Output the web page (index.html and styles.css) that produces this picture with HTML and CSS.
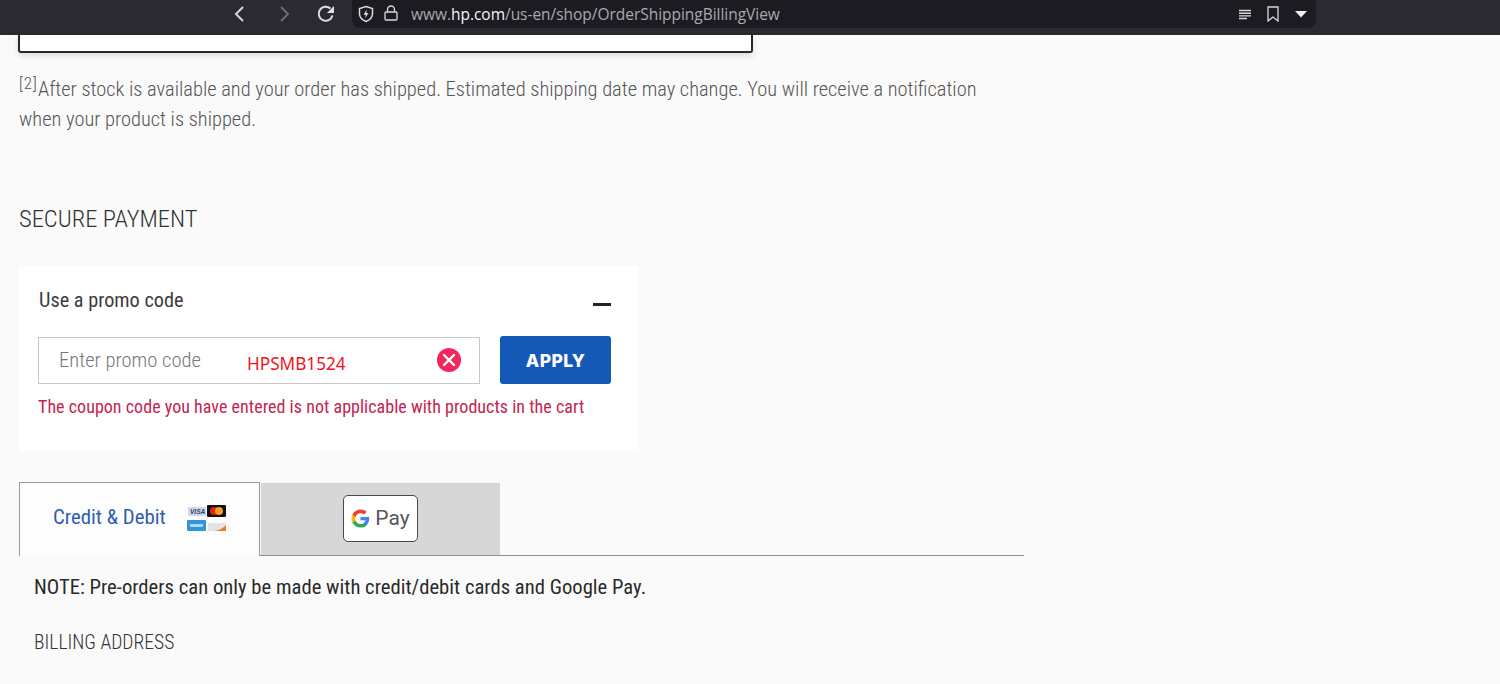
FILE: index.html
```html
<!DOCTYPE html>
<html lang="en">
<head>
<meta charset="utf-8">
<title>Order Shipping Billing</title>
<link rel="stylesheet" href="styles.css">
</head>
<body>
<header class="toolbar">
  <nav class="nav-buttons">
    <svg class="nav-icon" viewBox="0 0 18 18"><path d="M12 2 5 9l7 7" fill="none" stroke="#d6d6da" stroke-width="2"/></svg>
    <svg class="nav-icon" viewBox="0 0 18 18"><path d="m6 2 7 7-7 7" fill="none" stroke="#6b6b70" stroke-width="2"/></svg>
    <svg class="nav-icon nav-reload" viewBox="0 0 18 18"><path d="M15.500 10.500A7 7 0 1 1 13.500 3.600" fill="none" stroke="#e0e0e4" stroke-width="2"/><path d="M17 1v7h-7z" fill="#e0e0e4"/></svg>
  </nav>
  <div class="urlbar">
    <div class="url-left">
      <svg class="shield" viewBox="0 0 16 18"><path d="M8 1.500 14.500 3.500V9c0 3.500-3 6-6.500 7.500C4.500 15 1.500 12.500 1.500 9V3.500z" fill="none" stroke="#d8d8dc" stroke-width="1.500"/><path d="M8.800 4.500 5.500 9.800h2.200l-.5 3.500 3.300-5.300H8.300z" fill="#d8d8dc"/></svg>
      <svg class="lock" viewBox="0 0 14 16"><path d="M3.500 7V4.500a3.500 3.500 0 0 1 7 0V7" fill="none" stroke="#d8d8dc" stroke-width="1.300"/><rect x="1" y="7" width="12" height="8" rx="1" fill="none" stroke="#d8d8dc" stroke-width="1.300"/></svg>
      <span class="url"><span>www.</span><b>hp.com</b><span>/us-en/shop/OrderShippingBillingView</span></span>
    </div>
    <div class="url-right">
      <svg class="reader" viewBox="0 0 14 11"><path d="M1 1.500h12M1 4.200h12M1 6.900h12M1 9.500h8" stroke="#d8d8dc" stroke-width="1.400"/></svg>
      <svg class="bookmark" viewBox="0 0 12 16"><path d="M1 1h10v14l-5-4-5 4z" fill="none" stroke="#d8d8dc" stroke-width="1.300"/></svg>
      <svg class="caret" viewBox="0 0 12 8"><path d="M0 1h12L6 7.500z" fill="#eeeef0"/></svg>
    </div>
  </div>
</header>

<main class="page">
  <div class="summary-box"></div>
  <p class="footnote"><sup>[2]</sup>After stock is available and your order has shipped. Estimated shipping date may change. You will receive a notification when your product is shipped.</p>
  <h2 class="section-title">SECURE PAYMENT</h2>

  <section class="promo">
    <div class="promo-head">
      <span class="promo-title">Use a promo code</span>
      <span class="promo-toggle"></span>
    </div>
    <div class="promo-row">
      <div class="promo-input">
        <span class="placeholder">Enter promo code</span>
        <span class="code">HPSMB1524</span>
        <svg class="clear" viewBox="0 0 24 24"><circle cx="12" cy="12" r="12" fill="#f2275d"/><path d="m7 7 10 10M17 7 7 17" stroke="#fff" stroke-width="2.400" stroke-linecap="round"/></svg>
      </div>
      <button class="apply">APPLY</button>
    </div>
    <p class="promo-error">The coupon code you have entered is not applicable with products in the cart</p>
  </section>

  <div class="tabs">
    <div class="tab tab-active">
      <span class="tab-label">Credit &amp; Debit</span>
      <svg class="cards" viewBox="0 0 40 28">
        <rect x="1" y="3" width="18" height="9" fill="#d3d8e4"/><text x="3" y="10" class="visa">VISA</text>
        <rect x="20" y="1" width="19" height="12" rx="1" fill="#111"/><circle cx="27" cy="7" r="4" fill="#e2231a"/><circle cx="32" cy="7" r="4" fill="#f79e1b"/>
        <rect x="0" y="16" width="19" height="11" rx="1" fill="#2f97d8"/><rect x="3" y="20" width="13" height="3" fill="#a9d6f2"/>
        <rect x="21" y="19" width="18" height="8" fill="#e4e4e4"/><path d="M39 21v6H27q8-1 12-6z" fill="#ee7b2b"/>
      </svg>
    </div>
    <div class="tab tab-gpay">
      <div class="gpay">
        <svg class="g-logo" viewBox="0 0 48 48"><path fill="#4285f4" d="M46 24.500c0-1.600-.1-3.100-.4-4.500H24v8.500h12.400c-.5 2.900-2.100 5.300-4.600 6.900v5.700h7.400C43.500 36.700 46 31.100 46 24.500z"/><path fill="#34a853" d="M24 47c6.200 0 11.400-2.100 15.200-5.600l-7.400-5.700c-2.100 1.400-4.700 2.200-7.800 2.200-6 0-11-4-12.800-9.500H3.600v5.900C7.400 41.800 15.100 47 24 47z"/><path fill="#fbbc05" d="M11.200 28.900c-.5-1.400-.7-2.900-.7-4.400s.3-3 .7-4.400v-5.900H3.600C2 17.300 1 20.800 1 24.500s.9 7.200 2.600 10.300z"/><path fill="#ea4335" d="M24 10.600c3.400 0 6.400 1.200 8.800 3.400l6.600-6.600C35.400 3.700 30.200 1.500 24 1.500 15.100 1.500 7.400 6.700 3.600 14.200l7.600 5.900c1.800-5.500 6.800-9.500 12.800-9.500z"/></svg>
        <span class="pay">Pay</span>
      </div>
    </div>
  </div>

  <p class="note">NOTE: Pre-orders can only be made with credit/debit cards and Google Pay.</p>
  <p class="billing">BILLING ADDRESS</p>
</main>
</body>
</html>
```

FILE: styles.css
```css
* { box-sizing: border-box; }

html, body {
  margin: 0;
  height: 684px;
  overflow: hidden;
}

body {
  background: #fafafa;
  font-family: "Roboto", "Open Sans", sans-serif;
  font-stretch: 75%;
  color: #3a3a3a;
}

.toolbar {
  height: 35px;
  background: #2b2a33;
  display: flex;
  align-items: flex-start;
  padding-left: 231px;
  padding-right: 184px;
}

.nav-buttons {
  display: flex;
  align-items: center;
  gap: 26px;
  height: 27px;
  width: 121px;
  flex: none;
}

.nav-icon { width: 18px; height: 18px; flex: none; }
.nav-reload { margin-left: -2px; }

.urlbar {
  flex: 1;
  height: 28px;
  background: #1c1b22;
  border-radius: 0 0 8px 8px;
  display: flex;
  justify-content: space-between;
  align-items: center;
  padding: 0 9px 0 6px;
}

.url-left, .url-right { display: flex; align-items: center; }

.shield { width: 16px; height: 18px; }
.lock { width: 14px; height: 16px; margin-left: 10px; margin-top: -3px; }

.url {
  margin-left: 13px;
  font-family: "Open Sans", sans-serif;
  font-stretch: 100%;
  font-size: 15.500px;
  letter-spacing: -0.03px;
  color: #a9a9ad;
  white-space: nowrap;
}

.url b { font-weight: 400; color: #f4f4f5; }

.reader { width: 14px; height: 11px; }
.bookmark { width: 12px; height: 16px; margin-left: 15px; }
.caret { width: 12px; height: 8px; margin-left: 16px; }

.page { padding-left: 19px; }

.summary-box {
  width: 735px;
  height: 18px;
  margin-left: -1px;
  background: #fff;
  border: 2px solid #26262b;
  border-top: 0;
  border-radius: 0 0 3px 3px;
  box-shadow: 0 3px 6px rgba(0, 0, 0, .12);
}

.footnote {
  width: 990px;
  margin: 21px 0 0;
  font-size: 20.450px;
  font-weight: 300;
  line-height: 30px;
  color: #555;
}

.footnote sup {
  font-size: 17px;
  letter-spacing: 1px;
  line-height: 0;
  vertical-align: 7px;
}

.section-title {
  margin: 70px 0 0;
  font-size: 24.500px;
  line-height: 30px;
  font-weight: 300;
  color: #333;
}

.promo {
  width: 619px;
  height: 185px;
  margin-top: 32px;
  background: #fff;
  padding: 19px 27px 0 19px;
}

.promo-head {
  display: flex;
  justify-content: space-between;
  align-items: center;
  height: 30px;
}

.promo-title {
  margin-left: 1px;
  font-size: 20.300px;
  font-weight: 400;
  color: #3c3c3c;
}

.promo-toggle {
  width: 18px;
  height: 3px;
  margin-top: 9px;
  background: #222;
}

.promo-row {
  display: flex;
  align-items: center;
  gap: 20px;
  margin-top: 21px;
}

.promo-input {
  position: relative;
  width: 442px;
  height: 47px;
  border: 1px solid #c8c8c8;
  padding: 0 20px;
  display: flex;
  align-items: center;
}

.placeholder {
  font-size: 20.600px;
  font-weight: 300;
  color: #777;
  margin-top: -1px;
}

.code {
  position: absolute;
  left: 208px;
  top: 14px;
  font-family: "Noto Sans", sans-serif;
  font-stretch: 100%;
  font-size: 17.200px;
  line-height: 24px;
  color: #f0141e;
}

.clear {
  position: absolute;
  left: 398px;
  top: 10px;
  width: 24px;
  height: 24px;
}

.apply {
  width: 111px;
  height: 48px;
  border: 0;
  border-radius: 3px;
  background: #1559b7;
  color: #fff;
  font-family: "Inter", sans-serif;
  font-stretch: 100%;
  font-size: 17.500px;
  font-weight: 800;
  letter-spacing: .4px;
}

.promo-error {
  margin: 12px 0 0;
  font-size: 18px;
  line-height: 22px;
  letter-spacing: .03px;
  color: #c4254f;
  white-space: nowrap;
}

.tabs {
  display: flex;
  align-items: flex-end;
  width: 1005px;
  height: 74px;
  margin-top: 31px;
  border-bottom: 1px solid #8f8f8f;
}

.tab-active {
  width: 241px;
  height: 74px;
  margin-bottom: -1px;
  background: #fdfdfd;
  border: 1px solid #9a9a9a;
  border-bottom: 0;
  display: flex;
  align-items: center;
  padding: 0 0 6px 33px;
}

.tab-label {
  width: 114px;
  font-size: 20.800px;
  font-weight: 400;
  color: #2f5fae;
  white-space: nowrap;
}

.cards { width: 40px; height: 28px; margin-left: 20px; margin-top: 2px; flex: none; }

.visa {
  font-family: "Liberation Sans", sans-serif;
  font-size: 6.500px;
  font-weight: 700;
  font-style: italic;
  fill: #26408b;
}

.tab-gpay {
  width: 239px;
  height: 72px;
  margin-left: 1px;
  padding-bottom: 2px;
  background: #d7d7d7;
  display: flex;
  justify-content: center;
  align-items: center;
}

.gpay {
  width: 75px;
  height: 47px;
  background: #fff;
  border: 1.500px solid #4a4a4a;
  border-radius: 5px;
  display: flex;
  justify-content: center;
  align-items: center;
  gap: 5px;
}

.g-logo { width: 19px; height: 19px; }

.pay {
  font-family: "Roboto", sans-serif;
  font-stretch: 100%;
  font-size: 21px;
  color: #55585c;
}

.note {
  margin: 17px 0 0 15px;
  font-size: 20.660px;
  line-height: 28px;
  font-weight: 400;
  color: #2a2a2a;
}

.billing {
  margin: 28px 0 0 15px;
  font-size: 19.600px;
  line-height: 28px;
  font-weight: 300;
  color: #333;
}
```
